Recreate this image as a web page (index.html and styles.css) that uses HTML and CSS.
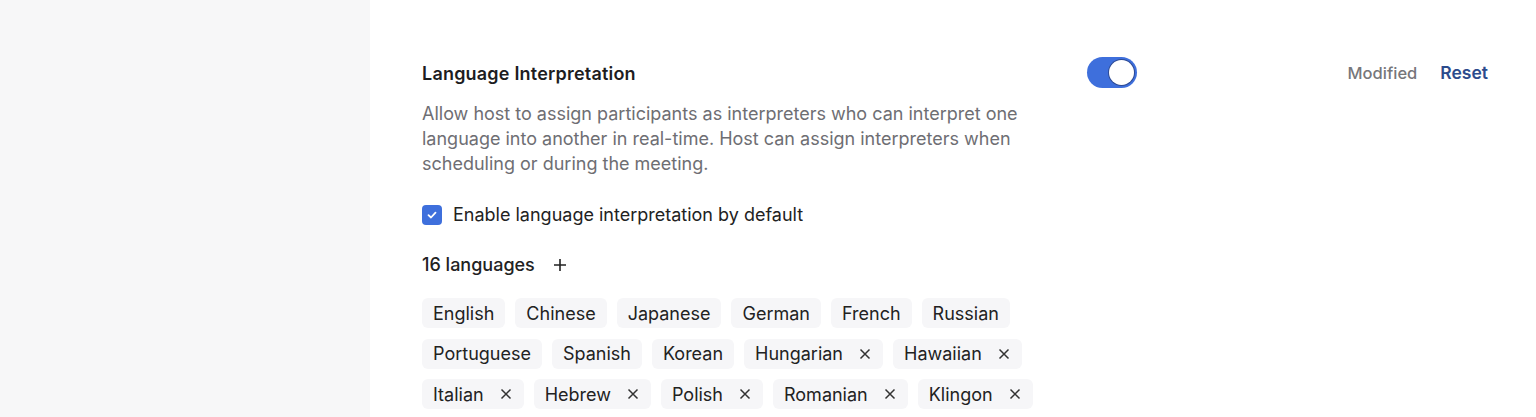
FILE: index.html
```html
<!DOCTYPE html>
<html>
  <head>
    <meta name="viewport" content="width=device-width, initial-scale=1.0">
    <title>Language Interpretation</title>
    <link rel="stylesheet" href="styles.css">
  </head>
  <body>
    <div class="sidebar"></div>
    <div class="main">
      <div class="setting">
        <div class="setting-body">
          <h3 class="setting-title">Language Interpretation</h3>
          <p class="setting-desc">Allow host to assign participants as interpreters who can interpret one language into another in real-time. Host can assign interpreters when scheduling or during the meeting.</p>
          <label class="check">
            <span class="check-box">
              <svg width="12" height="12" viewBox="0 0 12 12"><path d="M2.5 6.2 L5 8.5 L9.5 3.6" fill="none" stroke="#fff" stroke-width="1.8" stroke-linecap="round" stroke-linejoin="round"/></svg>
            </span>
            Enable language interpretation by default
          </label>
          <div class="lang-count">16 languages
            <svg class="plus" width="14" height="14" viewBox="0 0 14 14"><path d="M7 1 V13 M1 7 H13" stroke="#222" stroke-width="1.6"/></svg>
          </div>
          <div class="chips">
            <span class="chip">English</span>
            <span class="chip">Chinese</span>
            <span class="chip">Japanese</span>
            <span class="chip">German</span>
            <span class="chip">French</span>
            <span class="chip">Russian</span>
            <span class="chip">Portuguese</span>
            <span class="chip">Spanish</span>
            <span class="chip">Korean</span>
            <span class="chip">Hungarian <svg class="x" viewBox="0 0 12 12"><path d="M1.5 1.5 L10.5 10.5 M10.5 1.5 L1.5 10.5"/></svg></span>
            <span class="chip">Hawaiian <svg class="x" viewBox="0 0 12 12"><path d="M1.5 1.5 L10.5 10.5 M10.5 1.5 L1.5 10.5"/></svg></span>
            <span class="chip">Italian <svg class="x" viewBox="0 0 12 12"><path d="M1.5 1.5 L10.5 10.5 M10.5 1.5 L1.5 10.5"/></svg></span>
            <span class="chip">Hebrew <svg class="x" viewBox="0 0 12 12"><path d="M1.5 1.5 L10.5 10.5 M10.5 1.5 L1.5 10.5"/></svg></span>
            <span class="chip">Polish <svg class="x" viewBox="0 0 12 12"><path d="M1.5 1.5 L10.5 10.5 M10.5 1.5 L1.5 10.5"/></svg></span>
            <span class="chip">Romanian <svg class="x" viewBox="0 0 12 12"><path d="M1.5 1.5 L10.5 10.5 M10.5 1.5 L1.5 10.5"/></svg></span>
            <span class="chip">Klingon <svg class="x" viewBox="0 0 12 12"><path d="M1.5 1.5 L10.5 10.5 M10.5 1.5 L1.5 10.5"/></svg></span>
          </div>
        </div>
        <div class="toggle"><span class="knob"></span></div>
        <div class="status">
          <span class="modified">Modified</span>
          <a class="reset" href="#">Reset</a>
        </div>
      </div>
    </div>
  </body>
</html>
```

FILE: styles.css
```css
body {
  margin: 0;
  display: flex;
  height: 417px;
  overflow: hidden;
  font-family: Inter, "Noto Sans", sans-serif;
  color: #222;
  background: #fff;
}
.sidebar {
  width: 370px;
  flex: none;
  background: #f7f7f8;
}
.main {
  flex: 1;
  padding: 62px 48px 0 52px;
}
.setting {
  display: flex;
  align-items: flex-start;
}
.setting-body {
  width: 665px;
  flex: none;
}
.setting-title {
  margin: 0;
  font-size: 18px;
  line-height: 24px;
  font-weight: 600;
  letter-spacing: 0.2px;
  color: #1d1d1f;
}
.setting-desc {
  margin: 15px 0 0;
  width: 625px;
  font-size: 18px;
  line-height: 25px;
  color: #6e6e73;
}
.check {
  display: flex;
  align-items: center;
  gap: 11px;
  margin-top: 27px;
  font-size: 18px;
  line-height: 24px;
}
.check-box {
  width: 20px;
  height: 20px;
  border-radius: 4px;
  background: #3e6fdc;
  display: flex;
  align-items: center;
  justify-content: center;
}
.lang-count {
  display: flex;
  align-items: center;
  gap: 18px;
  margin-top: 26px;
  font-size: 18px;
  line-height: 24px;
  font-weight: 500;
}
.chips {
  display: flex;
  flex-wrap: wrap;
  gap: 10.5px 10px;
  margin-top: 21px;
  width: 640px;
}
.chip {
  display: inline-flex;
  align-items: center;
  gap: 16px;
  height: 30px;
  padding: 0 11px;
  border-radius: 6px;
  background: #f6f6f8;
  font-size: 18px;
  color: #222;
}
.chip .x {
  margin-right: 1px;
}
.x {
  width: 12px;
  height: 12px;
  fill: none;
  stroke: #333;
  stroke-width: 1.5;
}
.toggle {
  width: 50px;
  height: 31px;
  border-radius: 16px;
  background: #3e6fdc;
  margin-top: -5px;
  position: relative;
  flex: none;
}
.knob {
  position: absolute;
  right: 3px;
  top: 3px;
  width: 25px;
  height: 25px;
  border-radius: 50%;
  background: #fff;
  box-shadow: 0 0 0 1px rgba(30, 40, 80, 0.5);
}
.status {
  margin-left: auto;
  display: flex;
  gap: 23px;
  font-size: 16.5px;
  line-height: 22px;
}
.modified {
  color: #76767a;
  font-weight: 500;
}
.reset {
  color: #2c4b8c;
  font-weight: 600;
  font-size: 17.5px;
  text-decoration: none;
}
```
